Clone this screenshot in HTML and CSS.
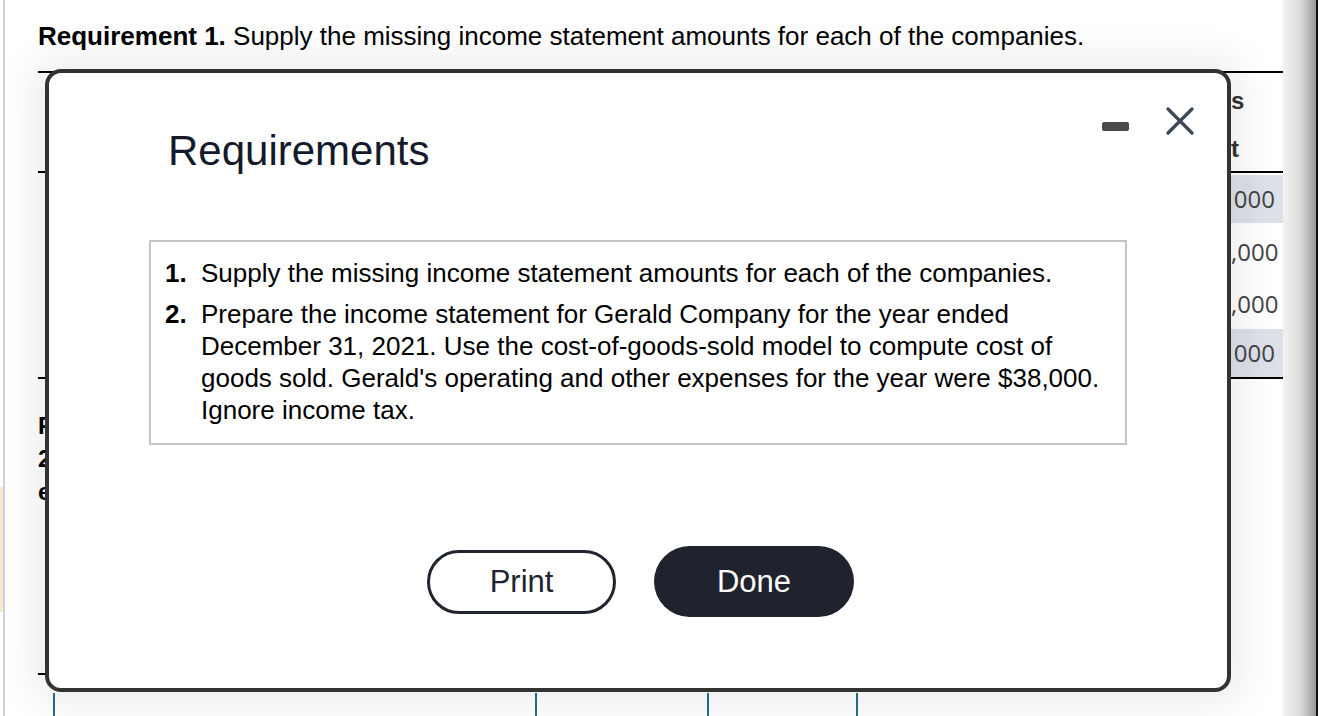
FILE: index.html
```html
<!DOCTYPE html>
<html>
<head>
<meta charset="utf-8">
<link rel="stylesheet" href="styles.css">
</head>
<body>
<div class="screen">
  <div class="rail"><div class="rail-mark"></div></div>
  <div class="page">
    <p class="task"><b>Requirement 1.</b> Supply the missing income statement amounts for each of the companies.</p>
    <div class="sheet">
      <div class="sheet-head">
        <div class="col-label"><span class="h1">s</span><span class="h2">t</span></div>
      </div>
      <div class="row shaded"><span>000</span></div>
      <div class="row"><span>,000</span></div>
      <div class="row"><span>,000</span></div>
      <div class="row shaded last"><span>000</span></div>
      <div class="below">
        <div class="bline b1">F</div>
        <div class="bline">2</div>
        <div class="bline">e</div>
      </div>
      <div class="footline"></div>
      <div class="cols">
        <span class="c c1"></span><span class="c c2"></span><span class="c c3"></span><span class="c c4"></span>
      </div>
    </div>
  </div>
  <div class="edge"></div>
  <div class="edge-line"></div>

  <div class="modal">
    <div class="modal-head">
      <h1 class="title">Requirements</h1>
      <div class="tools">
        <span class="minus"></span>
        <svg class="close" width="28" height="28" viewBox="0 0 28 28"><path d="M2 2 L26 26 M26 2 L2 26" stroke="#3d4654" stroke-width="3.2" stroke-linecap="round" fill="none"/></svg>
      </div>
    </div>
    <div class="box">
      <ol class="reqs">
        <li><b class="num">1.</b><span>Supply the missing income statement amounts for each of the companies.</span></li>
        <li><b class="num">2.</b><span>Prepare the income statement for Gerald Company for the year ended December 31, 2021. Use the cost-of-goods-sold model to compute cost of goods sold. Gerald's operating and other expenses for the year were $38,000. Ignore income tax.</span></li>
      </ol>
    </div>
    <div class="actions">
      <button class="btn print">Print</button>
      <button class="btn done">Done</button>
    </div>
  </div>
</div>
</body>
</html>
```
FILE: styles.css
```css
* { box-sizing: border-box; }
html, body { margin: 0; padding: 0; }
body {
  width: 1324px; height: 716px; overflow: hidden;
  font-family: "Liberation Sans", Arial, sans-serif;
  background: #fff;
}
.screen { position: relative; display: flex; width: 1324px; height: 716px; }
.rail {
  width: 5px; height: 716px; border-right: 2px solid #cfd0e0; position: relative;
}
.rail-mark { margin-top: 487px; height: 125px; width: 3px; background: #f7eccb; }
.page { flex: 0 0 1278px; padding-left: 33px; }
.task { margin: 21px 0 0; font-size: 26px; line-height: 30px; color: #000; }
.sheet { margin-top: 20px; width: 1245px; }
.sheet-head { height: 102px; border-top: 2px solid #000; border-bottom: 2px solid #000; display: flex; justify-content: flex-end; }
.col-label { width: 52px; display: flex; flex-direction: column; font-weight: bold; font-size: 24px; color: #333; }
.h1 { margin-top: 14px; height: 48px; }
.h2 { height: 30px; }
.row { height: 52px; display: flex; justify-content: flex-end; align-items: center; }
.row span { width: 52px; text-align: right; padding-right: 8px; font-size: 24px; color: #444; font-family: "Open Sans", "Liberation Sans", sans-serif; }
.row.shaded span { background: #dde1ea; height: 48px; line-height: 48px; }
.row.last { border-bottom: 2px solid #000; height: 50px; }
.below { padding-top: 30px; font-weight: bold; font-size: 24px; }
.bline { height: 33px; line-height: 33px; }
.footline { margin-top: 165px; width: 900px; border-top: 2px solid #000; }
.cols { position: relative; height: 43px; }
.c { position: absolute; top: 18px; bottom: 0; width: 2px; background: #2b6d8c; }
.c1 { left: 15px; } .c2 { left: 497px; } .c3 { left: 669px; } .c4 { left: 818px; }
.edge { flex: 0 0 33px; background: linear-gradient(to right, #f2f2f2 0%, #d9d9d9 55%, #9a9a9a 100%); }
.edge-line { flex: 0 0 2px; background: #111; }

.modal {
  position: absolute; left: 45px; top: 69px; width: 1186px; height: 623px;
  border: 4px solid #333; border-radius: 16px; background: #fff;
  box-shadow: 0 0 40px 14px rgba(0,0,0,0.07);
  padding: 34px 33px 0 100px;
  display: flex; flex-direction: column;
}
.modal-head { display: flex; justify-content: space-between; align-items: flex-start; height: 68px; }
.title { margin: 20px 0 0 19px; font-size: 42px; line-height: 48px; font-weight: normal; color: #141a2c; }
.tools { display: flex; align-items: flex-start; }
.minus { width: 27px; height: 9px; margin-top: 15px; margin-right: 37px; background: #4a4a4a; border-radius: 2px; }
.close { display: block; }
.box {
  margin-top: 65px; width: 978px; height: 205px;
  border: 2px solid #c4c4c4; padding: 15px 14px 0;
}
.reqs { list-style: none; margin: 0; padding: 0; font-size: 26px; line-height: 32px; color: #000; }
.reqs li { display: flex; }
.reqs li + li { margin-top: 9px; }
.num { width: 36px; flex: 0 0 36px; }
.actions { display: flex; justify-content: center; align-items: center; gap: 38px; margin-top: 101px; padding-right: 62px; }
.btn { font-family: "Liberation Sans", Arial, sans-serif; font-size: 31px; border-radius: 40px; cursor: pointer; }
.print { width: 189px; height: 64px; border: 3px solid #20242e; background: #fff; color: #20242e; }
.done { width: 200px; height: 71px; border: none; background: #20232d; color: #fff; }
```
